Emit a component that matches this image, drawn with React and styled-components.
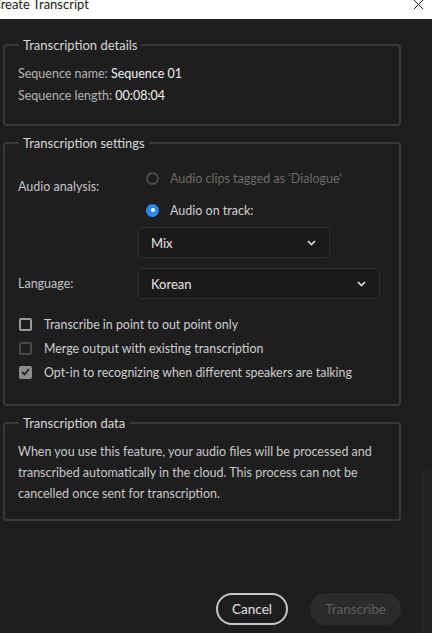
import React from "react";
import styled, { createGlobalStyle } from "styled-components";

const Global = createGlobalStyle`
  html, body { margin: 0; padding: 0; background: #1e1e1e; }
  body { font-family: Lato, "Noto Sans", sans-serif; overflow: hidden; }
  * { box-sizing: border-box; }
`;

const Window = styled.div`
  width: 432px;
  height: 633px;
  display: flex;
  flex-direction: column;
  background: #1e1e1e;
`;

const TitleBar = styled.div`
  height: 19px;
  flex: none;
  background: #ffffff;
  display: flex;
  align-items: flex-start;
  justify-content: space-between;
  overflow: hidden;
`;

const Title = styled.span`
  font-size: 13px;
  line-height: 10px;
  color: #1a1a1a;
  margin-left: -8px;
  margin-top: -1px;
  white-space: nowrap;
`;

const Close = styled.svg`
  width: 11px;
  height: 10px;
  margin-right: 8px;
  margin-top: 0px;
`;

const Body = styled.div`
  flex: 1;
  display: flex;
`;

const Main = styled.div`
  width: 422px;
  display: flex;
  flex-direction: column;
  padding: 0 21px 8px 3px;
`;

const SideTrack = styled.div`
  flex: 1;
  display: flex;
  flex-direction: column;
  padding-top: 451px;
`;

const Strip = styled.div`
  flex: 1;
  background: #212121;
  border-left: 1px solid #2a2a2a;
`;

const Group = styled.fieldset`
  margin: ${(p) => p.$top}px 0 0 0;
  padding: ${(p) => p.$pt}px 0 ${(p) => p.$pb}px 13px;
  border: 2px solid #393939;
  border-radius: 4px;
  min-width: 0;
`;

const Legend = styled.legend`
  margin-left: 1px;
  padding: 0 4px;
  font-size: 13px;
  line-height: 18px;
  color: #d8d8d8;
`;

const InfoLine = styled.div`
  font-size: 12.5px;
  line-height: 22px;
  color: #b4b4b4;
`;

const Value = styled.span`
  color: #f0f0f0;
`;

const Grid = styled.div`
  display: grid;
  grid-template-columns: 120px 1fr;
  align-items: start;
`;

const Label = styled.div`
  font-size: 12.5px;
  line-height: 20px;
  color: #c4c4c4;
  padding-top: ${(p) => p.$pt || 0}px;
`;

const RadioCol = styled.div`
  display: flex;
  flex-direction: column;
`;

const RadioRow = styled.div`
  height: 32px;
  display: flex;
  align-items: center;
  padding-left: 8px;
  gap: 11px;
  font-size: 12.5px;
  color: ${(p) => (p.$disabled ? "#6a6a6a" : "#d0d0d0")};
`;

const RadioDot = styled.span`
  width: 13px;
  height: 13px;
  border-radius: 50%;
  flex: none;
  border: ${(p) => (p.$on ? "none" : "2px solid #4a4a4a")};
  background: ${(p) => (p.$on ? "#2c86ef" : "transparent")};
  display: flex;
  align-items: center;
  justify-content: center;
  &::after {
    content: "";
    width: 4px;
    height: 4px;
    border-radius: 50%;
    background: ${(p) => (p.$on ? "#ffffff" : "transparent")};
  }
`;

const Select = styled.div`
  width: ${(p) => p.$w}px;
  height: 31px;
  margin-top: ${(p) => p.$mt || 0}px;
  background: #1a1a1a;
  border: 1.5px solid #2f2f2f;
  border-radius: 4px;
  display: flex;
  align-items: center;
  justify-content: space-between;
  padding: 0 13px 0 12px;
  font-size: 13px;
  color: #e6e6e6;
`;

const Chevron = styled.svg`
  width: 9px;
  height: 6px;
`;

const LangRow = styled(Grid)`
  margin-top: 10px;
  align-items: center;
`;

const Checks = styled.div`
  margin-top: 13px;
  display: flex;
  flex-direction: column;
`;

const CheckRow = styled.div`
  height: 24px;
  display: flex;
  align-items: center;
  gap: 12px;
  padding-left: 1px;
  font-size: 12.4px;
  color: #cfcfcf;
`;

const Box = styled.span`
  width: 13px;
  height: 13px;
  flex: none;
  border-radius: 2px;
  border: 2px solid ${(p) => (p.$checked ? "#8c8c8c" : p.$disabled ? "#474747" : "#9a9a9a")};
  background: ${(p) => (p.$checked ? "#8c8c8c" : "transparent")};
  display: flex;
  align-items: center;
  justify-content: center;
`;

const Para = styled.p`
  margin: 0;
  padding-right: 20px;
  font-size: 12.5px;
  line-height: 21px;
  color: #c8c8c8;
`;

const Footer = styled.div`
  margin-top: auto;
  display: flex;
  justify-content: flex-end;
  gap: 22px;
  padding-right: 0;
`;

const Button = styled.button`
  height: 32px;
  width: ${(p) => p.$w}px;
  border-radius: 16px;
  font-family: inherit;
  font-size: 13.5px;
  padding: 0;
  border: ${(p) => (p.$primary ? "none" : "2px solid #c6c6c6")};
  background: ${(p) => (p.$primary ? "#2b2b2b" : "transparent")};
  color: ${(p) => (p.$primary ? "#5e5e5e" : "#e2e2e2")};
`;

const ChevronIcon = () => (
  <Chevron viewBox="0 0 9 6">
    <path d="M1 1 L4.5 4.5 L8 1" fill="none" stroke="#e0e0e0" strokeWidth="1.6" />
  </Chevron>
);

export default function App() {
  return (
    <>
      <Global />
      <Window>
        <TitleBar>
          <Title>Create Transcript</Title>
          <Close viewBox="0 0 11 10">
            <path d="M1 0 L10 9 M10 0 L1 9" stroke="#222" strokeWidth="1" />
          </Close>
        </TitleBar>
        <Body>
          <Main>
            <Group $top={17} $pt={9} $pb={17}>
              <Legend>Transcription details</Legend>
              <InfoLine>
                Sequence name: <Value>Sequence 01</Value>
              </InfoLine>
              <InfoLine>
                Sequence length: <Value>00:08:04</Value>
              </InfoLine>
            </Group>

            <Group $top={8} $pt={10} $pb={20}>
              <Legend>Transcription settings</Legend>
              <Grid>
                <Label $pt={15}>Audio analysis:</Label>
                <RadioCol>
                  <RadioRow $disabled>
                    <RadioDot />
                    Audio clips tagged as 'Dialogue'
                  </RadioRow>
                  <RadioRow>
                    <RadioDot $on />
                    Audio on track:
                  </RadioRow>
                  <Select $w={192} $mt={1}>
                    Mix
                    <ChevronIcon />
                  </Select>
                </RadioCol>
              </Grid>
              <LangRow>
                <Label>Language:</Label>
                <Select $w={242}>
                  Korean
                  <ChevronIcon />
                </Select>
              </LangRow>
              <Checks>
                <CheckRow>
                  <Box />
                  Transcribe in point to out point only
                </CheckRow>
                <CheckRow>
                  <Box $disabled />
                  Merge output with existing transcription
                </CheckRow>
                <CheckRow>
                  <Box $checked>
                    <svg width="9" height="8" viewBox="0 0 9 8">
                      <path d="M1 4 L3.5 6.5 L8 1" fill="none" stroke="#1e1e1e" strokeWidth="1.8" />
                    </svg>
                  </Box>
                  Opt-in to recognizing when different speakers are talking
                </CheckRow>
              </Checks>
            </Group>

            <Group $top={8} $pt={9} $pb={15}>
              <Legend>Transcription data</Legend>
              <Para>
                When you use this feature, your audio files will be processed and
                transcribed automatically in the cloud. This process can not be
                cancelled once sent for transcription.
              </Para>
            </Group>

            <Footer>
              <Button $w={72}>Cancel</Button>
              <Button $w={91} $primary>
                Transcribe
              </Button>
            </Footer>
          </Main>
          <SideTrack>
            <Strip />
          </SideTrack>
        </Body>
      </Window>
    </>
  );
}
